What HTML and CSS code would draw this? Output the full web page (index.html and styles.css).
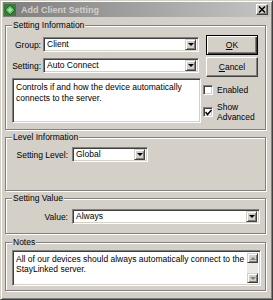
FILE: index.html
```html
<!DOCTYPE html>
<html>
<head>
<meta charset="utf-8">
<link rel="stylesheet" href="styles.css">
</head>
<body>
<div class="window">
  <div class="titlebar">
    <svg class="app-icon" width="12" height="12" viewBox="0 0 12 12">
      <rect x="0" y="0" width="12" height="12" fill="#3c7a3c"/>
      <polygon points="6,1 11,6 6,11 1,6" fill="#5fb85f" stroke="#1f4f1f" stroke-width="0.8"/>
      <polygon points="6,3.5 8.5,6 6,8.5 3.5,6" fill="#9be09b"/>
    </svg>
    <span class="title">Add Client Setting</span>
    <span class="close">
      <svg width="8" height="7" viewBox="0 0 8 7"><path d="M1 0.5 L7 6.5 M7 0.5 L1 6.5" stroke="#000" stroke-width="1.5"/></svg>
    </span>
  </div>
  <div class="content">
    <div class="group g-info">
      <span class="legend">Setting Information</span>
      <div class="info-left">
        <div class="field-row">
          <span class="lbl">Group:</span>
          <div class="combo wide"><span class="val">Client</span><span class="drop"><i class="tri"></i></span></div>
        </div>
        <div class="field-row">
          <span class="lbl">Setting:</span>
          <div class="combo wide"><span class="val">Auto Connect</span><span class="drop"><i class="tri"></i></span></div>
        </div>
        <div class="memo desc">Controls if and how the device automatically connects to the server.</div>
      </div>
      <div class="info-right">
        <div class="btn default"><span><u>O</u>K</span></div>
        <div class="btn"><span><u>C</u>ancel</span></div>
        <div class="check enabled"><span class="box"></span><span>Enabled</span></div>
        <div class="check adv"><span class="box"><svg width="7" height="7" viewBox="0 0 7 7"><path d="M0.5 3 L2.5 5.5 L6.5 1" fill="none" stroke="#000" stroke-width="1.5"/></svg></span><span>Show<br>Advanced</span></div>
      </div>
    </div>

    <div class="group g-level">
      <span class="legend">Level Information</span>
      <div class="field-row">
        <span class="lbl2">Setting Level:</span>
        <div class="combo short"><span class="val">Global</span><span class="drop"><i class="tri"></i></span></div>
      </div>
    </div>

    <div class="group g-value">
      <span class="legend">Setting Value</span>
      <div class="field-row">
        <span class="lbl2">Value:</span>
        <div class="combo long"><span class="val">Always</span><span class="drop"><i class="tri"></i></span></div>
      </div>
    </div>

    <div class="group g-notes">
      <span class="legend">Notes</span>
      <div class="memo notes">
        <div class="notes-text">All of our devices should always automatically connect to the StayLinked server.</div>
        <div class="vscroll">
          <span class="sbtn"><i class="tri-up"></i></span>
          <span class="strack"></span>
          <span class="sbtn"><i class="tri-down"></i></span>
        </div>
      </div>
    </div>
  </div>
</div>
</body>
</html>
```
FILE: styles.css
```css
html, body {
  margin: 0;
  padding: 0;
}
body {
  width: 273px;
  height: 300px;
  overflow: hidden;
  background: #d4d0c8;
  font-family: "Liberation Sans", Arial, sans-serif;
  font-size: 8.5px;
  color: #000;
}
.window {
  box-sizing: border-box;
  width: 273px;
  height: 300px;
  border: 1px solid;
  border-color: #d4d0c8 #404040 #404040 #d4d0c8;
  box-shadow: inset 1px 1px 0 #fff, inset -1px -1px 0 #808080;
  padding: 1px 2px 2px 2px;
  background: #d4d0c8;
}
.titlebar {
  height: 15px;
  display: flex;
  align-items: center;
  background: linear-gradient(to right, #7e7e7e, #c4c4c4);
  padding-left: 1px;
  padding-right: 2px;
}
.app-icon {
  display: block;
  flex: none;
}
.title {
  margin-left: 5px;
  color: #d4d0c8;
  font-weight: bold;
  font-size: 9px;
  flex: 1;
}
.close {
  box-sizing: border-box;
  width: 12px;
  height: 11px;
  background: #d4d0c8;
  border: 1px solid;
  border-color: #fff #404040 #404040 #fff;
  box-shadow: inset -1px -1px 0 #808080;
  display: flex;
  align-items: center;
  justify-content: center;
}
.close svg { display: block; }

.content {
  padding: 0 1px 0 2px;
}
.group {
  position: relative;
  box-sizing: border-box;
  border: 1px solid #808080;
  box-shadow: 1px 1px 0 #fff, inset 1px 1px 0 #fff;
  width: 261px;
}
.legend {
  position: absolute;
  top: -6px;
  left: 6px;
  padding: 0 1px;
  background: #d4d0c8;
  line-height: 11px;
}
.g-info {
  margin-top: 8px;
  height: 105px;
  display: flex;
  padding: 9px 0 0 6px;
}
.g-level {
  margin-top: 7px;
  height: 54px;
  padding: 9px 0 0 6px;
}
.g-value {
  margin-top: 7px;
  height: 36px;
  padding: 10px 0 0 6px;
}
.g-notes {
  margin-top: 8px;
  height: 49px;
  padding: 7px 0 0 6px;
}

.info-left {
  width: 189px;
  padding-top: 2px;
  display: flex;
  flex-direction: column;
}
.field-row {
  display: flex;
  align-items: center;
}
.info-left .field-row + .field-row {
  margin-top: 6px;
}
.lbl {
  width: 29px;
  text-align: right;
  padding-right: 2px;
}
.lbl2 {
  width: 56px;
  text-align: right;
  padding-right: 4px;
}
.combo {
  box-sizing: border-box;
  height: 15px;
  background: #fff;
  border: 1px solid;
  border-color: #808080 #fff #fff #808080;
  box-shadow: inset 1px 1px 0 #404040, inset -1px -1px 0 #d4d0c8;
  display: flex;
  align-items: center;
  padding: 2px 2px 2px 2px;
}
.combo.wide { width: 156px; }
.combo.short { width: 76px; }
.combo.long { width: 188px; }
.val {
  flex: 1;
  padding-left: 1px;
  line-height: 11px;
}
.drop {
  box-sizing: border-box;
  width: 11px;
  height: 11px;
  background: #d4d0c8;
  border: 1px solid;
  border-color: #d4d0c8 #404040 #404040 #d4d0c8;
  box-shadow: inset 1px 1px 0 #fff, inset -1px -1px 0 #808080;
  display: flex;
  align-items: center;
  justify-content: center;
}
.tri {
  display: block;
  width: 0;
  height: 0;
  border-left: 3px solid transparent;
  border-right: 3px solid transparent;
  border-top: 3px solid #000;
}
.memo {
  box-sizing: border-box;
  background: #fff;
  border: 1px solid;
  border-color: #808080 #fff #fff #808080;
  box-shadow: inset 1px 1px 0 #404040, inset -1px -1px 0 #d4d0c8;
}
.desc {
  margin-top: 5px;
  height: 45px;
  padding: 3px 3px 0 3px;
  line-height: 11px;
}

.info-right {
  width: 60px;
  margin-left: 2px;
  display: flex;
  flex-direction: column;
}
.btn {
  box-sizing: border-box;
  width: 52px;
  height: 20px;
  margin-left: 3px;
  background: #d4d0c8;
  border: 1px solid;
  border-color: #fff #404040 #404040 #fff;
  box-shadow: inset -1px -1px 0 #808080;
  display: flex;
  align-items: center;
  justify-content: center;
}
.btn.default {
  border-color: #000;
  box-shadow: inset 1px 1px 0 #fff, inset -1px -1px 0 #404040, inset -2px -2px 0 #808080;
}
.btn + .btn {
  margin-top: 2px;
}
.check {
  display: flex;
  align-items: center;
}
.check.enabled {
  margin-top: 8px;
}
.check.adv {
  margin-top: 7px;
  line-height: 10px;
}
.box {
  box-sizing: border-box;
  width: 10px;
  height: 10px;
  flex: none;
  margin-right: 4px;
  background: #fff;
  border: 1px solid;
  border-color: #808080 #fff #fff #808080;
  box-shadow: inset 1px 1px 0 #404040, inset -1px -1px 0 #d4d0c8;
  display: flex;
  align-items: center;
  justify-content: center;
}
.box svg { display: block; }

.notes {
  width: 249px;
  height: 36px;
  display: flex;
  padding: 2px 2px 2px 3px;
}
.notes-text {
  flex: 1;
  line-height: 10px;
  padding-top: 1px;
}
.vscroll {
  width: 11px;
  display: flex;
  flex-direction: column;
}
.strack {
  flex: 1;
  background: #eceae6;
}
.sbtn {
  box-sizing: border-box;
  height: 10px;
  background: #d4d0c8;
  border: 1px solid;
  border-color: #d4d0c8 #404040 #404040 #d4d0c8;
  box-shadow: inset 1px 1px 0 #fff, inset -1px -1px 0 #808080;
  display: flex;
  align-items: center;
  justify-content: center;
}
.tri-up, .tri-down {
  display: block;
  width: 0;
  height: 0;
  border-left: 3px solid transparent;
  border-right: 3px solid transparent;
}
.tri-up { border-bottom: 3px solid #808080; }
.tri-down { border-top: 3px solid #808080; }
```
